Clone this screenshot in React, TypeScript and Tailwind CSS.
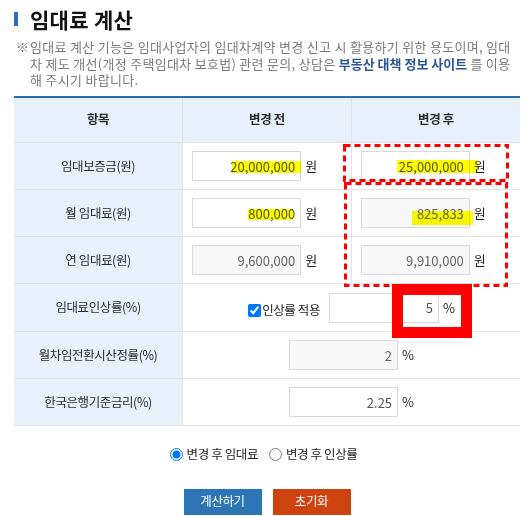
import React from "react";

type FieldProps = {
  value: string;
  unit: string;
  gray?: boolean;
  width?: string;
  hl?: string;
};

// input box + unit, with an optional yellow marker laid over the number
const Field = ({ value, unit, gray, width = "w-[109px]", hl }: FieldProps) => (
  <div className="relative inline-flex items-center">
    <input
      readOnly
      value={value}
      className={`${width} h-[30px] border border-[#d8d8d8] pr-[5px] text-right text-[13px] outline-none ${
        gray ? "bg-[#f7f7f7] text-[#666]" : "bg-white text-[#555]"
      }`}
    />
    <span className="ml-[4px] text-[13px] text-[#222]">{unit}</span>
    {hl && <span className={`pointer-events-none absolute bg-[#ffff00] mix-blend-multiply ${hl}`} />}
  </div>
);

const Label = ({ children }: { children: React.ReactNode }) => (
  <td className="border-b border-r border-[#e3e3e3] bg-[#e8f0fb] text-center text-[12.5px] tracking-[-0.4px] text-[#2a2a2a]">
    {children}
  </td>
);

const Cell = ({ children, last }: { children: React.ReactNode; last?: boolean }) => (
  <td className={`border-b border-[#e3e3e3] pl-[9px] ${last ? "" : "border-r"}`}>{children}</td>
);

export default function App() {
  return (
    <div className="min-h-[516px] bg-white pl-[14px] pr-[6px] pt-[7px] font-['Noto_Sans_CJK_KR','Noto_Sans',sans-serif] text-[#222]">
      {/* title */}
      <div className="flex items-center">
        <span className="h-[14px] w-[4px] bg-[#2f6fba]" />
        <h2 className="ml-[12px] text-[21px] font-bold leading-[24px] tracking-[0.3px] text-[#111]">임대료 계산</h2>
      </div>

      {/* notice */}
      <div className="mt-[8px] flex text-[13px] leading-[16.5px] tracking-[0.3px] text-[#7b7b7b]">
        <span className="w-[16px] shrink-0 pl-[2px]">※</span>
        <p className="mr-[3px]">
          임대료 계산 기능은 임대사업자의 임대차계약 변경 신고 시 활용하기 위한 용도이며, 임대차 제도 개선(개정 주택임대차
          보호법) 관련 문의, 상담은 <b className="font-bold tracking-normal text-[#2b5797]">부동산 대책 정보 사이트</b> 를
          이용해 주시기 바랍니다.
        </p>
      </div>

      {/* table */}
      <div className="relative mt-[7px]">
        <table className="w-full table-fixed border-collapse border-t-2 border-[#2d6cb5]">
          <thead>
            <tr className="h-[46px] bg-[#e8f0fb] text-[12.5px] tracking-[-0.4px] text-[#2a2a2a]">
              <th className="border-b border-r border-[#e3e3e3] font-bold">항목</th>
              <th className="border-b border-r border-[#e3e3e3] font-bold">변경 전</th>
              <th className="border-b border-[#e3e3e3] font-bold">변경 후</th>
            </tr>
          </thead>
          <tbody>
            <tr className="h-[47px]">
              <Label>임대보증금(원)</Label>
              <Cell>
                <Field value="20,000,000" unit="원" hl="left-[40px] top-[10px] h-[12px] w-[69px]" />
              </Cell>
              <Cell last>
                <Field value="25,000,000" unit="원" hl="left-[36px] top-[9px] h-[13px] w-[81px]" />
              </Cell>
            </tr>
            <tr className="h-[47px]">
              <Label>월 임대료(원)</Label>
              <Cell>
                <Field value="800,000" unit="원" hl="left-[56px] top-[11px] h-[11px] w-[45px]" />
              </Cell>
              <Cell last>
                <Field value="825,833" unit="원" gray hl="left-[51px] top-[13px] h-[14px] w-[61px]" />
              </Cell>
            </tr>
            <tr className="h-[47px]">
              <Label>연 임대료(원)</Label>
              <Cell>
                <Field value="9,600,000" unit="원" gray />
              </Cell>
              <Cell last>
                <Field value="9,910,000" unit="원" gray />
              </Cell>
            </tr>
            <tr className="h-[48px]">
              <Label>임대료인상률(%)</Label>
              <td colSpan={2} className="border-b border-[#e3e3e3]">
                <div className="flex items-center justify-center">
                  <label className="mr-[9px] flex items-center pt-[6px] text-[12.5px] tracking-[-0.4px] text-[#222]">
                    <input type="checkbox" defaultChecked className="m-0 mr-[1px] h-[13px] w-[13px] accent-[#0075ff]" />
                    인상률 적용
                  </label>
                  <Field value="5" unit="%" width="w-[110px]" />
                </div>
              </td>
            </tr>
            <tr className="h-[47px]">
              <Label>월차임전환시산정률(%)</Label>
              <td colSpan={2} className="border-b border-[#e3e3e3]">
                <div className="flex justify-center">
                  <Field value="2" unit="%" gray />
                </div>
              </td>
            </tr>
            <tr className="h-[47px]">
              <Label>한국은행기준금리(%)</Label>
              <td colSpan={2} className="border-b border-[#e3e3e3]">
                <div className="flex justify-center">
                  <Field value="2.25" unit="%" />
                </div>
              </td>
            </tr>
          </tbody>
        </table>

        {/* review marks drawn over the table */}
        <svg className="pointer-events-none absolute left-[329px] top-[48px]" width="166" height="38">
          <rect x="1.5" y="1.5" width="163" height="35" fill="none" stroke="#ff0000" strokeWidth="3" strokeDasharray="6 4" />
        </svg>
        <svg className="pointer-events-none absolute left-[330px] top-[86px]" width="164" height="105">
          <rect x="1.5" y="1.5" width="161" height="102" fill="none" stroke="#ff0000" strokeWidth="3" strokeDasharray="6 4" />
        </svg>
        <div className="pointer-events-none absolute left-[378px] top-[188px] h-[54px] w-[80px] border-[11px] border-[#ff0000]" />
      </div>

      {/* mode */}
      <div className="mt-[19px] flex items-center justify-center pr-[7px] text-[12.5px] tracking-[-0.4px] text-[#222]">
        <label className="flex items-center">
          <input type="radio" name="mode" defaultChecked className="m-0 h-[13px] w-[13px] accent-[#0075ff]" />
          <span className="ml-[4px]">변경 후 임대료</span>
        </label>
        <label className="ml-[11px] flex items-center">
          <input type="radio" name="mode" className="m-0 h-[13px] w-[13px]" />
          <span className="ml-[4px]">변경 후 인상률</span>
        </label>
      </div>

      {/* actions */}
      <div className="mt-[25px] flex justify-center gap-[11px]">
        <button className="h-[26px] w-[78px] bg-[#2e75b6] text-[12.5px] tracking-[-0.4px] text-white">계산하기</button>
        <button className="h-[26px] w-[78px] bg-[#cf4310] text-[12.5px] tracking-[-0.4px] text-white">초기화</button>
      </div>
    </div>
  );
}
